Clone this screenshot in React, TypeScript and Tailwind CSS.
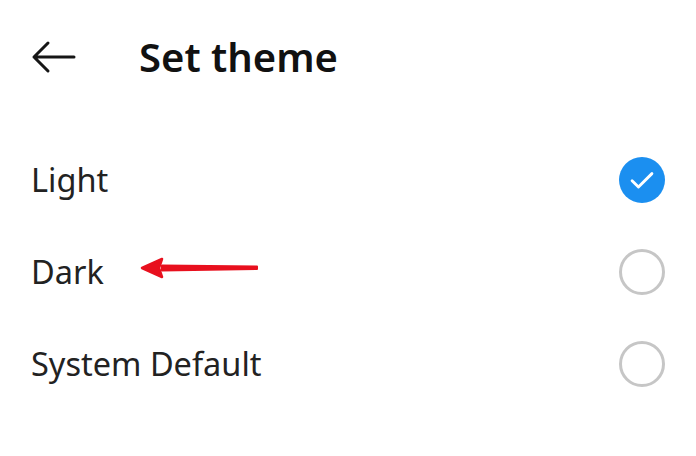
import React, { useState } from 'react';

type ThemeOption = 'light' | 'dark' | 'system';

const options: { id: ThemeOption; label: string }[] = [
  { id: 'light', label: 'Light' },
  { id: 'dark', label: 'Dark' },
  { id: 'system', label: 'System Default' },
];

const Radio: React.FC<{ checked: boolean }> = ({ checked }) =>
  checked ? (
    <span className="flex h-[46px] w-[46px] items-center justify-center rounded-full bg-[#1b8ff0]">
      <svg width="34" height="34" viewBox="0 0 24 24" fill="none" stroke="#fff" strokeWidth={2} strokeLinecap="round" strokeLinejoin="round">
        <path d="M5 12.5l4.5 4.5L19 7.5" />
      </svg>
    </span>
  ) : (
    <span className="block h-[46px] w-[46px] rounded-full border-[3px] border-[#c6c6c6]" />
  );

const App: React.FC = () => {
  const [theme, setTheme] = useState<ThemeOption>('light');

  return (
    <div className="relative h-[456px] w-[696px] bg-white text-[#161616]" style={{ fontFamily: '"Noto Sans", sans-serif' }}>
      {/* Header */}
      <div className="flex h-[114px] items-center pl-[31px]">
        <button className="flex h-[40px] w-[46px] items-center">
          <svg width="46" height="34" viewBox="0 0 46 34" fill="none" stroke="#161616" strokeWidth={3} strokeLinecap="round" strokeLinejoin="round">
            <path d="M3 17h40M17 3L3 17l14 14" />
          </svg>
        </button>
        <h1 className="ml-[62px] text-[40px] font-semibold leading-none text-[#111]">Set theme</h1>
      </div>

      {/* Options */}
      <div className="mt-[20px] flex flex-col px-[31px]">
        {options.map((opt) => (
          <button
            key={opt.id}
            onClick={() => setTheme(opt.id)}
            className="flex h-[92px] items-center justify-between text-left"
          >
            <span className="text-[32.5px] leading-none text-[#222]">{opt.label}</span>
            <Radio checked={theme === opt.id} />
          </button>
        ))}
      </div>

      {/* Annotation arrow */}
      <svg className="absolute left-[138px] top-[256px]" width="124" height="24" viewBox="0 0 124 24" fill="none">
        <path d="M24 9.5L119 10.5 L119 13 L24 14.5z" fill="#e8101e" stroke="#e8101e" strokeWidth={2} strokeLinejoin="round" />
        <path d="M24 3L4 12l20 9l-3-9z" fill="#e8101e" stroke="#e8101e" strokeWidth={2.5} strokeLinejoin="round" />
      </svg>
    </div>
  );
};

export default App;
